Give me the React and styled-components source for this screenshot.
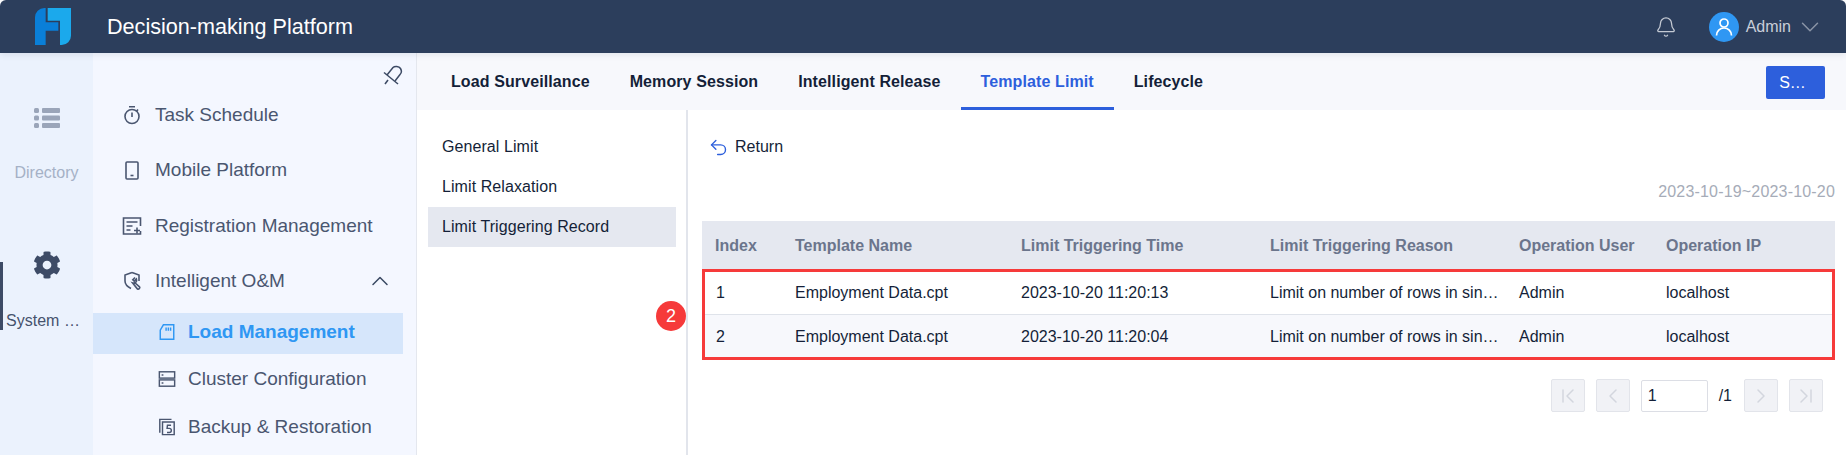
import React from 'react'
import styled, { createGlobalStyle } from 'styled-components'
import { FaCog } from 'react-icons/fa'
import { Bell, ChevronDown, ChevronUp, ChevronLeft, ChevronRight, ChevronFirst, ChevronLast, Undo2 } from 'lucide-react'

const GlobalStyle = createGlobalStyle`
  html, body { margin: 0; padding: 0; background: #fff; }
  body { font-family: "Liberation Sans", Arial, sans-serif; overflow: hidden; }
`

const Page = styled.div`
  width: 1846px;
  height: 455px;
  display: flex;
  flex-direction: column;
  overflow: hidden;
`

const Header = styled.header`
  height: 53px;
  flex: none;
  display: flex;
  align-items: center;
  padding: 0 21px 0 35px;
  background: #2c3e5c;
  border-radius: 6px 6px 0 0;
  box-shadow: 0 2px 6px rgba(44, 62, 92, 0.1);
  position: relative;
  z-index: 2;
`
const Logo = styled.svg`
  width: 36px;
  height: 37px;
  flex: none;
`
const Title = styled.div`
  margin-left: 36px;
  font-size: 21.6px;
  color: #fff;
  flex: 1;
`
const BellButton = styled.div`
  display: flex;
  color: #c4c9d3;
  margin-right: 32px;
`
const Avatar = styled.div`
  width: 30px;
  height: 30px;
  border-radius: 50%;
  background: #2f97f3;
  display: flex;
  align-items: center;
  justify-content: center;
`
const UserName = styled.span`
  margin-left: 7px;
  font-size: 16px;
  color: #c9ced8;
`
const UserCaret = styled.div`
  display: flex;
  margin-left: 4px;
  color: #8a94a6;
`

const Body = styled.div`
  flex: 1;
  display: flex;
  min-height: 0;
`

const Rail = styled.nav`
  width: 93px;
  flex: none;
  padding-top: 44px;
  background: #ebf2fd;
  box-sizing: border-box;
`
const RailItem = styled.div`
  position: relative;
  height: 147px;
  display: flex;
  flex-direction: column;
  align-items: center;
  color: ${p => (p.$active ? '#46536d' : '#a5b1c6')};
  ${p => p.$active && `
    &::before {
      content: '';
      position: absolute;
      left: 0;
      top: 18px;
      width: 3px;
      height: 68px;
      background: #3d4b66;
    }
  `}
`
const RailIcon = styled.div`
  height: 42px;
  display: flex;
  align-items: center;
  justify-content: center;
  color: ${p => (p.$active ? '#3d4b66' : '#9aa5b9')};
`
const RailLabel = styled.div`
  margin-top: ${p => (p.$active ? '26px' : '25px')};
  padding-right: ${p => (p.$active ? '7px' : '0')};
  font-size: 16px;
  line-height: 18px;
  text-align: center;
  white-space: nowrap;
`

const Menu = styled.aside`
  width: 324px;
  flex: none;
  padding-top: 5px;
  background: #f4f7ff;
  border-right: 1px solid #e4e7ee;
  box-sizing: border-box;
  overflow: hidden;
`
const PinRow = styled.div`
  height: 30px;
  display: flex;
  justify-content: flex-end;
  padding-right: 5px;
  color: #3c4a64;
`
const MenuList = styled.div`
  margin-top: -1px;
`
const MenuItem = styled.div`
  height: 55.5px;
  display: flex;
  align-items: center;
  padding-left: 29px;
  color: #4a5670;
  font-size: 19px;
`
const MenuIcon = styled.svg`
  width: 20px;
  height: 20px;
  flex: none;
  margin-right: 13px;
`
const MenuCaret = styled.div`
  margin-left: auto;
  margin-right: 22px;
  display: flex;
  color: #3c4a64;
`
const SubList = styled.div`
  margin-top: 4px;
`
const SubItem = styled.div`
  width: 310px;
  height: ${p => (p.$active ? '41px' : '48px')};
  box-sizing: border-box;
  display: flex;
  align-items: center;
  padding: ${p => (p.$active ? '0 0 3px 62px' : '2px 0 0 62px')};
  font-size: 19px;
  font-weight: ${p => (p.$active ? 700 : 400)};
  color: ${p => (p.$active ? '#2f97f3' : '#4a5670')};
  background: ${p => (p.$active ? '#d6e6fb' : 'transparent')};

  ${MenuIcon} {
    width: 18px;
    height: 18px;
    margin-left: 3px;
    margin-right: 12px;
  }
`

const Main = styled.main`
  flex: 1;
  min-width: 0;
  display: flex;
  flex-direction: column;
`
const TabBar = styled.div`
  height: 57px;
  flex: none;
  display: flex;
  align-items: stretch;
  padding: 0 21px 0 14px;
  background: #f7f8fc;
`
const Tab = styled.div`
  display: flex;
  align-items: center;
  padding: 3px 20px 0;
  font-size: 16px;
  font-weight: 700;
  letter-spacing: 0.1px;
  color: ${p => (p.$active ? '#2d5fdc' : '#141f38')};
  border-bottom: 3px solid ${p => (p.$active ? '#2d5fdc' : 'transparent')};
`
const SaveButton = styled.button`
  margin: 13px 0 11px auto;
  width: 59px;
  padding: 0 6px 0 0;
  border: 0;
  border-radius: 2px;
  background: #2d5fdc;
  color: #fff;
  font: 16px "Liberation Sans", Arial, sans-serif;
`

const Content = styled.div`
  flex: 1;
  display: flex;
  min-height: 0;
`
const SideNav = styled.div`
  width: 271px;
  flex: none;
  box-sizing: border-box;
  padding: 17px 10px 0 11px;
  border-right: 2px solid #e2e5ec;
`
const SideItem = styled.div`
  height: 40px;
  display: flex;
  align-items: center;
  padding-left: 14px;
  font-size: 16px;
  letter-spacing: 0.08px;
  color: #141f38;
  background: ${p => (p.$active ? '#e5e8f0' : 'transparent')};
`
const Panel = styled.div`
  flex: 1;
  min-width: 0;
  padding: 21px 11px 0 14px;
`
const ReturnLink = styled.div`
  height: 32px;
  display: flex;
  align-items: center;
  gap: 6px;
  margin-left: 6px;
  font-size: 16px;
  color: #141f38;
`
const ReturnIcon = styled.div`
  display: flex;
  color: #2d5fdc;
`
const DateRange = styled.div`
  margin-top: 16px;
  height: 26px;
  line-height: 26px;
  text-align: right;
  font-size: 16px;
  letter-spacing: 0.18px;
  color: #a6acb8;
`
const TableWrap = styled.div`
  position: relative;
  margin-top: 16px;
`
const HeadRow = styled.div`
  display: grid;
  grid-template-columns: 80px 226px 249px 249px 147px 1fr;
  height: 48px;
  align-items: center;
  background: #e5e8f0;
`
const HeadCell = styled.div`
  padding: 2px 0 0 13px;
  font-size: 16px;
  font-weight: 700;
  color: #6b758c;
`
const RowsFrame = styled.div`
  border: 3px solid #f63a3a;
`
const Row = styled.div`
  display: grid;
  grid-template-columns: 77px 226px 249px 249px 147px 1fr;
  height: ${p => (p.$alt ? '41px' : '42px')};
  padding-top: ${p => (p.$alt ? '1px' : '0')};
  align-items: center;
  background: ${p => (p.$alt ? '#f7f8fc' : '#fff')};
  border-top: ${p => (p.$alt ? '1px solid #dfe3ea' : '0')};
`
const Cell = styled.div`
  padding-left: 13px;
  font-size: 16px;
  color: #141f38;
  white-space: nowrap;

  &:first-child {
    padding-left: 11px;
  }
`
const Badge = styled.div`
  position: absolute;
  left: -46px;
  top: 80px;
  width: 30px;
  height: 30px;
  border-radius: 50%;
  background: #f63a3a;
  color: #fff;
  font-size: 18px;
  display: flex;
  align-items: center;
  justify-content: center;
`
const Pager = styled.div`
  margin-top: 19px;
  padding-right: 12px;
  display: flex;
  justify-content: flex-end;
  align-items: center;
  gap: 11px;
`
const PageButton = styled.div`
  width: 34px;
  height: 33px;
  box-sizing: border-box;
  display: flex;
  align-items: center;
  justify-content: center;
  border: 1px solid #e2e4ea;
  border-radius: 2px;
  background: #f1f2f6;
  color: #d3d6de;
`
const PageInput = styled.input`
  width: 67px;
  height: 32px;
  box-sizing: border-box;
  padding: 0 6px;
  border: 1px solid #dcdee5;
  border-radius: 2px;
  font: 16px "Liberation Sans", Arial, sans-serif;
  color: #141f38;
  outline: none;
`
const PageTotal = styled.span`
  font-size: 16px;
  color: #141f38;
  margin-right: 1px;
`

const stroke = { fill: 'none', stroke: 'currentColor', strokeWidth: 1.6 }

const ListIcon = () => (
  <svg width="26" height="22" viewBox="0 0 26 22" fill="currentColor">
    <rect x="0" y="1" width="5" height="5" rx="1.5" />
    <rect x="0" y="8.5" width="5" height="5" rx="1.5" />
    <rect x="0" y="16" width="5" height="5" rx="1.5" />
    <rect x="8" y="1" width="18" height="5" rx="1" />
    <rect x="8" y="8.5" width="18" height="5" rx="1" />
    <rect x="8" y="16" width="18" height="5" rx="1" />
  </svg>
)

const PinIcon = () => (
  <svg width="36" height="30" viewBox="0 0 36 30" fill="none" stroke="currentColor" strokeWidth="1.5">
    <path d="M9 14.5 23 26" />
    <path d="M12 17 18 9.5c1.5-1.500 6-1.500 7.500 1s1 4.500-.5 6L20 23" />
    <path d="M13 22l-3 4" />
  </svg>
)

const TimerIcon = () => (
  <MenuIcon viewBox="0 0 20 20" color="#4a5670" {...stroke}>
    <circle cx="10" cy="11.5" r="7" />
    <path d="M7 1.800h6M10 7.500v4.500M16 4.500l-1.400 1.600" />
  </MenuIcon>
)
const PhoneIcon = () => (
  <MenuIcon viewBox="0 0 20 20" color="#4a5670" {...stroke}>
    <rect x="4" y="2" width="12" height="17" rx="1" />
    <path d="M8.500 15.500h3" />
  </MenuIcon>
)
const RegisterIcon = () => (
  <MenuIcon viewBox="0 0 20 20" color="#4a5670" {...stroke}>
    <path d="M18.500 10V2H1.500v16h17v-3" />
    <path d="M4.500 6h11M4.500 10h6M4.500 14h4M12 14.500h6M15 11.500v6" />
  </MenuIcon>
)
const WrenchIcon = () => (
  <MenuIcon viewBox="0 0 20 20" color="#4a5670" {...stroke}>
    <path d="M10 1.500 17 4v6M10 1.500 3 4v6c0 3.500 3 6 6 7.500" />
    <path d="M13 6.500 10.800 8.700l1.400 1.400L14.400 8a3 3 0 0 1-3.700 4l4.600 5.800c1.400 1 3.200-.6 2.200-2L12 11" />
  </MenuIcon>
)
const CardIcon = () => (
  <MenuIcon viewBox="0 0 20 20" color="#2f97f3" {...stroke}>
    <path d="M6 2h11.500v16h-15V8z" />
    <path d="M9 5v3.500M11.500 5v3.500M14 5v3.500" />
  </MenuIcon>
)
const ServerIcon = () => (
  <MenuIcon viewBox="0 0 20 20" color="#4a5670" {...stroke}>
    <rect x="1.500" y="2" width="17" height="7" />
    <rect x="1.500" y="11" width="17" height="7" />
    <path d="M4 5.500h2M4 14.500h2" />
  </MenuIcon>
)
const BackupIcon = () => (
  <MenuIcon viewBox="0 0 20 20" color="#4a5670" {...stroke}>
    <path d="M15 1.500H2v15" />
    <path d="M18 4.500H5v14h13z" />
    <path d="M14.500 8h-4l-.4 3.500h2.400a2.300 2.300 0 0 1 0 4.600H10" />
  </MenuIcon>
)

const menuTop = [
  { label: 'Task Schedule', icon: <TimerIcon /> },
  { label: 'Mobile Platform', icon: <PhoneIcon /> },
  { label: 'Registration Management', icon: <RegisterIcon /> },
]

const tabs = ['Load Surveillance', 'Memory Session', 'Intelligent Release', 'Template Limit', 'Lifecycle']
const columns = ['Index', 'Template Name', 'Limit Triggering Time', 'Limit Triggering Reason', 'Operation User', 'Operation IP']
const rows = [
  ['1', 'Employment Data.cpt', '2023-10-20 11:20:13'],
  ['2', 'Employment Data.cpt', '2023-10-20 11:20:04'],
]

export default function App() {
  return (
    <Page>
      <GlobalStyle />
      <Header>
        <Logo viewBox="30 22 108 111">
          <path d="M30 133V50a28 28 0 0 1 28-28h4v43h38v25H62v43z" fill="#0a7fd8" />
          <path d="M68 22h70v83a28 28 0 0 1-28 28h-5V60H68z" fill="#1ba9ec" />
        </Logo>
        <Title>Decision-making Platform</Title>
        <BellButton>
          <Bell size={22} strokeWidth={1.4} />
        </BellButton>
        <Avatar>
          <svg width="20" height="20" viewBox="0 0 20 20" fill="none" stroke="#fff" strokeWidth="1.7">
            <circle cx="10" cy="6" r="4" />
            <path d="M2.500 18.500a7.500 7.500 0 0 1 15 0" />
          </svg>
        </Avatar>
        <UserName>Admin</UserName>
        <UserCaret>
          <ChevronDown size={30} strokeWidth={1.2} />
        </UserCaret>
      </Header>
      <Body>
        <Rail>
          <RailItem>
            <RailIcon><ListIcon /></RailIcon>
            <RailLabel>Directory</RailLabel>
          </RailItem>
          <RailItem $active>
            <RailIcon $active><FaCog size={28} /></RailIcon>
            <RailLabel $active>System …</RailLabel>
          </RailItem>
        </Rail>
        <Menu>
          <PinRow>
            <PinIcon />
          </PinRow>
          <MenuList>
            {menuTop.map(item => (
              <MenuItem key={item.label}>
                {item.icon}
                {item.label}
              </MenuItem>
            ))}
            <MenuItem>
              <WrenchIcon />
              Intelligent O&amp;M
              <MenuCaret><ChevronUp size={28} strokeWidth={1.3} /></MenuCaret>
            </MenuItem>
            <SubList>
              <SubItem $active><CardIcon />Load Management</SubItem>
              <SubItem><ServerIcon />Cluster Configuration</SubItem>
              <SubItem><BackupIcon />Backup &amp; Restoration</SubItem>
            </SubList>
          </MenuList>
        </Menu>
        <Main>
          <TabBar>
            {tabs.map(t => (
              <Tab key={t} $active={t === 'Template Limit'}>{t}</Tab>
            ))}
            <SaveButton>S…</SaveButton>
          </TabBar>
          <Content>
            <SideNav>
              <SideItem>General Limit</SideItem>
              <SideItem>Limit Relaxation</SideItem>
              <SideItem $active>Limit Triggering Record</SideItem>
            </SideNav>
            <Panel>
              <ReturnLink>
                <ReturnIcon><Undo2 size={21} strokeWidth={1.6} /></ReturnIcon>
                Return
              </ReturnLink>
              <DateRange>2023-10-19~2023-10-20</DateRange>
              <TableWrap>
                <HeadRow>
                  {columns.map(c => <HeadCell key={c}>{c}</HeadCell>)}
                </HeadRow>
                <RowsFrame>
                  {rows.map((r, i) => (
                    <Row key={r[0]} $alt={i === 1}>
                      {r.map(v => <Cell key={v}>{v}</Cell>)}
                      <Cell>Limit on number of rows in sin…</Cell>
                      <Cell>Admin</Cell>
                      <Cell>localhost</Cell>
                    </Row>
                  ))}
                </RowsFrame>
                <Badge>2</Badge>
              </TableWrap>
              <Pager>
                <PageButton><ChevronFirst size={24} strokeWidth={1.5} /></PageButton>
                <PageButton><ChevronLeft size={24} strokeWidth={1.5} /></PageButton>
                <PageInput defaultValue="1" />
                <PageTotal>/1</PageTotal>
                <PageButton><ChevronRight size={24} strokeWidth={1.5} /></PageButton>
                <PageButton><ChevronLast size={24} strokeWidth={1.5} /></PageButton>
              </Pager>
            </Panel>
          </Content>
        </Main>
      </Body>
    </Page>
  )
}
